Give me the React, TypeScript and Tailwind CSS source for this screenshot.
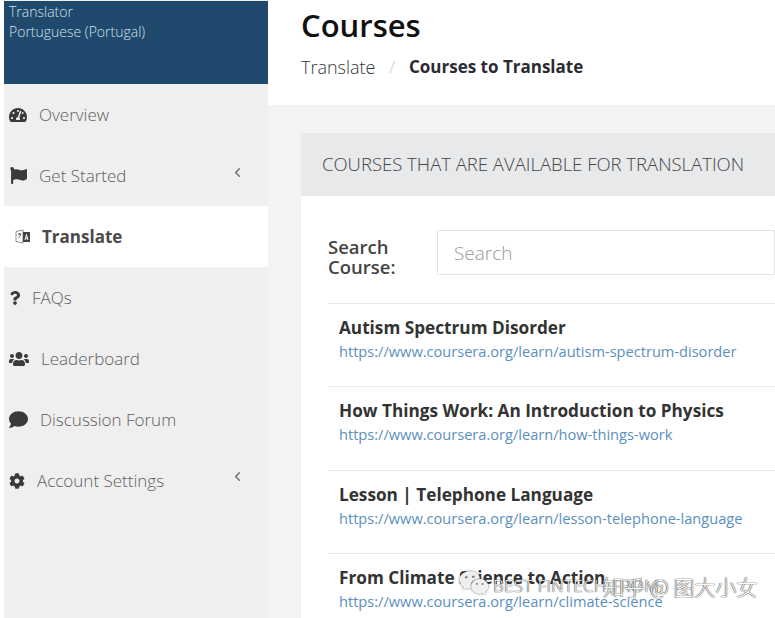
import { ChevronLeft } from 'lucide-react';
import { FaTachometerAlt, FaFlag, FaQuestion, FaUsers, FaComment, FaCog, FaWeixin } from 'react-icons/fa';

// small book + translation glyph used on the active row
function TranslateIcon() {
  return (
    <svg width="16" height="16" viewBox="0 0 16 16" className="text-[#444444]">
      <path d="M1 2.5 8 1v13l-7-1.5z" fill="none" stroke="currentColor" strokeWidth="1" opacity="0.6" />
      <path d="M8 3h7v10H8z" fill="currentColor" />
      <path d="M10 11l1.5-5.5L13 11M10.6 9.2h1.8" fill="none" stroke="#ffffff" strokeWidth="1" />
      <path d="M3 5h3M4.5 4v1M3.5 9c1.5-1 2-2.5 2-4" fill="none" stroke="currentColor" strokeWidth="0.9" />
    </svg>
  );
}

const menu = [
  { label: 'Overview', icon: <FaTachometerAlt size={18} />, box: 'w-[30px]' },
  { label: 'Get Started', icon: <FaFlag size={17} className="ml-px" />, box: 'w-[30px]', arrow: 'mb-[6px]' },
  { label: 'Translate', icon: <TranslateIcon />, box: 'w-[33px] pl-[6px]', active: true },
  { label: 'FAQs', icon: <FaQuestion size={14} className="-ml-[1px]" />, box: 'w-[23px]' },
  { label: 'Leaderboard', icon: <FaUsers size={20} />, box: 'w-[32px]' },
  { label: 'Discussion Forum', icon: <FaComment size={19} />, box: 'w-[31px]' },
  { label: 'Account Settings', icon: <FaCog size={16} />, box: 'w-[28px]', arrow: 'mb-[8px]' },
];

const courses = [
  { title: 'Autism Spectrum Disorder', url: 'https://www.coursera.org/learn/autism-spectrum-disorder' },
  { title: 'How Things Work: An Introduction to Physics', url: 'https://www.coursera.org/learn/how-things-work' },
  { title: 'Lesson | Telephone Language', url: 'https://www.coursera.org/learn/lesson-telephone-language' },
  { title: 'From Climate Science to Action', url: 'https://www.coursera.org/learn/climate-science' },
];

export default function App() {
  return (
    <div className="flex h-[618px] w-[775px] overflow-hidden bg-white pl-1 font-['Open_Sans',sans-serif]">
      {/* Sidebar */}
      <aside className="w-[264px] shrink-0 bg-[#efefef] pt-px">
        <div className="h-[83px] bg-[#1f4a6e] px-[5px] pt-[1px] text-[14px] leading-[20px] font-light text-[#d3e0ea]">
          <div>Translator</div>
          <div>Portuguese (Portugal)</div>
        </div>
        {menu.map((item) => (
          <div
            key={item.label}
            className={`flex h-[61px] items-center pl-[5px] pr-[23px] ${item.active ? 'bg-white' : ''}`}
          >
            <span className={`flex shrink-0 ${item.box} text-[#3a3a3a]`}>{item.icon}</span>
            <span
              className={`text-[17px] ${item.active ? 'font-bold text-[#4a4a4a]' : 'font-light text-[#606060]'}`}
            >
              {item.label}
            </span>
            {item.arrow && <ChevronLeft size={15} className={`${item.arrow} ml-auto text-[#666666]`} />}
          </div>
        ))}
      </aside>

      {/* Main */}
      <main className="flex min-w-0 flex-1 flex-col">
        <header className="h-[105px] shrink-0 bg-white pl-[33px] pt-[5px]">
          <h1 className="text-[31px] leading-[41px] font-semibold text-[#111111]">Courses</h1>
          <div className="mt-[9px] flex items-center leading-[24px]">
            <span className="text-[18px] font-light text-[#333333]">Translate</span>
            <span className="mx-[14px] text-[16px] font-light text-[#c4c4c4]">/</span>
            <span className="text-[17px] font-bold text-[#2b2b33]">Courses to Translate</span>
          </div>
        </header>

        <div className="flex-1 overflow-hidden bg-[#f2f3f4] pl-[33px] pt-[28px]">
          <div className="flex h-[63px] items-center bg-[#e8e9ea] pb-[2px] pl-[21px] text-[18.5px] font-light whitespace-nowrap text-[#444444]">
            COURSES THAT ARE AVAILABLE FOR TRANSLATION
          </div>
          <div className="relative h-[500px] bg-white pl-[27px] pt-[34px]">
            <div className="flex h-[74px] border-b border-[#e6e6e6]">
              <label className="w-[109px] pt-[7px] text-[18.5px] leading-[20px] font-semibold text-[#444444]">
                Search Course:
              </label>
              <input
                placeholder="Search"
                className="h-[45px] flex-1 rounded-l-[2px] border border-[#e3e3e3] bg-white px-4 text-[19px] font-light outline-none placeholder:text-[#999999]"
              />
            </div>
            {courses.map((course) => (
              <div key={course.title} className="h-[83.4px] border-b border-[#e9e9e9] pl-[11px] pt-[13px]">
                <div className="text-[17.2px] leading-[22px] font-bold whitespace-nowrap text-[#333333]">
                  {course.title}
                </div>
                <div className="mt-[2px] text-[14.6px] leading-[20px] whitespace-nowrap text-[#5b8fbd]">
                  {course.url}
                </div>
              </div>
            ))}

            {/* Watermark */}
            <FaWeixin size={30} className="absolute left-[158px] top-[372px] text-white/90 drop-shadow-[0_0_1px_#555]" />
            <div className="absolute left-[192px] top-[378px] whitespace-nowrap text-[17px] leading-[24px] font-light tracking-[0.4px] text-white [text-shadow:0_0_1px_#222,0_0_1px_#222]">
              BEST FINTECH FROM
            </div>
            <div className="absolute left-[302px] top-[377px] whitespace-nowrap font-['Noto_Sans_CJK_SC',sans-serif] text-[21px] leading-[26px] font-light text-white [text-shadow:0_0_1px_#222,0_0_1px_#222]">
              知乎 @ 图大小女
            </div>
          </div>
        </div>
      </main>
    </div>
  );
}
